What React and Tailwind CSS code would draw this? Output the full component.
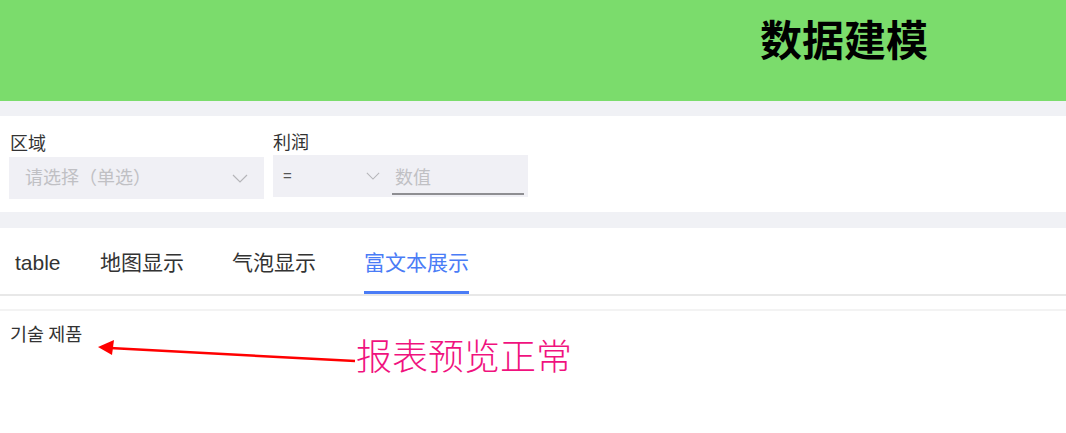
import React from "react";

function Chevron({ className }) {
  return (
    <svg className={className} viewBox="0 0 16 9" fill="none" stroke="#b5b5b9" strokeWidth="1.2">
      <path d="M1 1 L8 8 L15 1" />
    </svg>
  );
}

export default function App() {
  return (
    <div className="relative w-[1066px] h-[433px] overflow-hidden bg-white [font-family:'Liberation_Sans','Noto_Sans_CJK_SC',sans-serif]">
      {/* header */}
      <div className="h-[101px] bg-[#7bdc6c] pl-[760px] pt-[10px]">
        <div className="text-[42px] leading-[56px] font-bold text-black [font-family:'Noto_Sans_CJK_SC',sans-serif]">数据建模</div>
      </div>
      <div className="h-[15px] bg-[#f0f1f5]" />

      {/* filters */}
      <div className="h-[96px] flex gap-[9px] pl-[9px] pt-[16px]">
        <div className="w-[255px] flex flex-col">
          <div className="text-[18px] leading-[24px] text-[#333] pl-[1px]">区域</div>
          <div className="mt-[1px] h-[42px] bg-[#f0f0f5] flex items-center pl-[16px] pr-[16px]">
            <span className="flex-1 text-[18px] text-[#c0c0c4]">请选择（单选）</span>
            <Chevron className="w-[16px] h-[9px]" />
          </div>
        </div>
        <div className="w-[255px] flex flex-col">
          <div className="text-[18px] leading-[23px] text-[#333]">利润</div>
          <div className="h-[42px] bg-[#f0f0f5] flex items-center pl-[10px] pr-[4px]">
            <span className="w-[83px] text-[15px] text-[#555]">=</span>
            <Chevron className="w-[14px] h-[8px]" />
            <div className="ml-[12px] flex-1 h-[38px] flex items-end">
              <div className="w-full border-b-2 border-[#8e8e92] h-[32px] flex items-center pl-[3px]">
                <span className="text-[18px] text-[#c0c0c4]">数值</span>
              </div>
            </div>
          </div>
        </div>
      </div>
      <div className="h-[16px] bg-[#f0f1f5]" />

      {/* tabs */}
      <div className="h-[66px] flex items-stretch pl-[15px] border-b-2 border-[#e8e8e8] box-content">
        <div className="w-[47px] mr-[38px] flex items-center pt-[3px] text-[21px] text-[#333]">table</div>
        <div className="mr-[48px] flex items-center pt-[3px] text-[21px] text-[#333]">地图显示</div>
        <div className="mr-[48px] flex items-center pt-[3px] text-[21px] text-[#333]">气泡显示</div>
        <div className="relative flex items-center pt-[3px] text-[21px] text-[#4a7cf6]">
          富文本展示
          <div className="absolute left-0 right-0 bottom-0 h-[3px] bg-[#4a7cf6]" />
        </div>
      </div>
      <div className="h-[13px]" />
      <div className="h-[2px] bg-[#f3f3f3]" />

      {/* content */}
      <div className="pl-[10px] pt-[10px] text-[18.5px] leading-[24px] text-[#333] [font-family:'Noto_Sans_CJK_KR',sans-serif]">
        기술 제품
      </div>

      {/* annotation */}
      <svg className="absolute left-0 top-0 pointer-events-none" width="1066" height="433">
        <line x1="355" y1="361" x2="110" y2="348" stroke="#ff0000" strokeWidth="2.5" />
        <polygon points="98,347 114,340 112,355" fill="#ff0000" />
      </svg>
      <div className="absolute left-[356px] top-[330px] text-[36px] leading-[48px] text-[#f0127e] font-light [font-family:'Noto_Sans_CJK_SC',sans-serif]">
        报表预览正常
      </div>
    </div>
  );
}
